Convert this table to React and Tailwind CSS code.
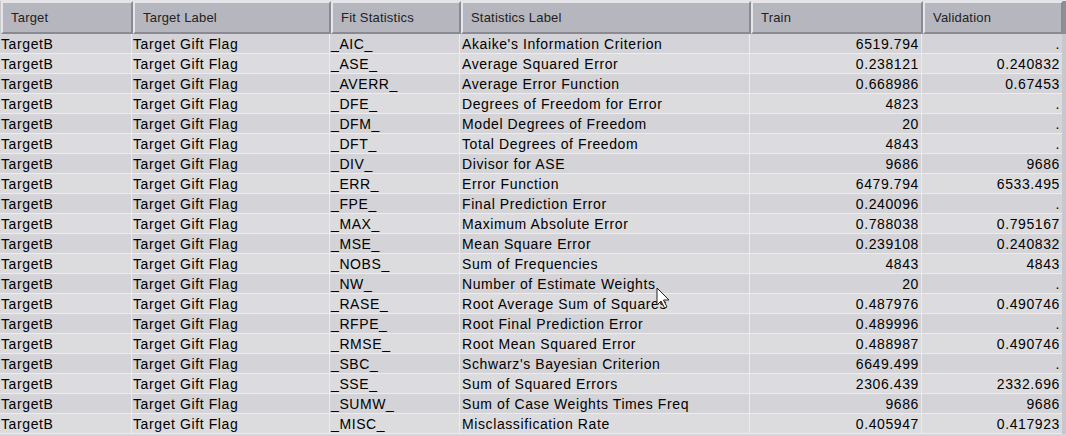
import React from 'react';

const rows = [
  ['_AIC_', "Akaike's Information Criterion", '6519.794', '.'],
  ['_ASE_', 'Average Squared Error', '0.238121', '0.240832'],
  ['_AVERR_', 'Average Error Function', '0.668986', '0.67453'],
  ['_DFE_', 'Degrees of Freedom for Error', '4823', '.'],
  ['_DFM_', 'Model Degrees of Freedom', '20', '.'],
  ['_DFT_', 'Total Degrees of Freedom', '4843', '.'],
  ['_DIV_', 'Divisor for ASE', '9686', '9686'],
  ['_ERR_', 'Error Function', '6479.794', '6533.495'],
  ['_FPE_', 'Final Prediction Error', '0.240096', '.'],
  ['_MAX_', 'Maximum Absolute Error', '0.788038', '0.795167'],
  ['_MSE_', 'Mean Square Error', '0.239108', '0.240832'],
  ['_NOBS_', 'Sum of Frequencies', '4843', '4843'],
  ['_NW_', 'Number of Estimate Weights', '20', '.'],
  ['_RASE_', 'Root Average Sum of Squares', '0.487976', '0.490746'],
  ['_RFPE_', 'Root Final Prediction Error', '0.489996', '.'],
  ['_RMSE_', 'Root Mean Squared Error', '0.488987', '0.490746'],
  ['_SBC_', "Schwarz's Bayesian Criterion", '6649.499', '.'],
  ['_SSE_', 'Sum of Squared Errors', '2306.439', '2332.696'],
  ['_SUMW_', 'Sum of Case Weights Times Freq', '9686', '9686'],
  ['_MISC_', 'Misclassification Rate', '0.405947', '0.417923'],
];

const headers = ['Target', 'Target Label', 'Fit Statistics', 'Statistics Label', 'Train', 'Validation'];
const cols = 'grid grid-cols-[132px_198px_130px_290px_172px_140px]';

export default function App() {
  return (
    <div
      className="relative w-[1066px] h-[436px] bg-[#d6d6da] overflow-hidden text-black"
      style={{ fontFamily: '"Liberation Sans", Arial, sans-serif' }}
    >
      <div className="flex border-t border-[#e4e4e8] bg-[#c8c8cc] pl-[1px]">
        <div className={`${cols} h-[33px]`}>
          {headers.map((h) => (
            <div
              key={h}
              className="flex items-center pl-[8px] pt-[1px] bg-[#b6b6be] border-t-2 border-l-2 border-t-[#e6e6ea] border-l-[#e6e6ea] border-b-2 border-r-2 border-b-[#8a8a92] border-r-[#8a8a92] text-[13px] tracking-[0.2px] text-[#222]"
            >
              {h}
            </div>
          ))}
        </div>
        <div className="flex-1 bg-[#8e8e96]" />
      </div>
      <div className="flex">
        <div className="flex flex-col">
          {rows.map((r, i) => (
            <div
              key={r[0]}
              className={`${cols} h-[20px] border-b border-[#ececef] text-[14px] leading-[20px] tracking-[0.6px] ${
                i % 2 === 0 ? 'bg-[#d4d4d8]' : 'bg-[#dcdcdf]'
              }`}
            >
              <div className="pl-[1px] border-r border-[#ececef] whitespace-nowrap">TargetB</div>
              <div className="pl-[1px] border-r border-[#ececef] whitespace-nowrap">Target Gift Flag</div>
              <div className="pl-[1px] border-r border-[#ececef] whitespace-nowrap">{r[0]}</div>
              <div className="pl-[2px] border-r border-[#ececef] whitespace-nowrap">{r[1]}</div>
              <div className="pr-[2px] border-r border-[#ececef] text-right whitespace-nowrap">{r[2]}</div>
              <div className="pr-[2px] text-right whitespace-nowrap">{r[3]}</div>
            </div>
          ))}
        </div>
        <div className="flex-1 bg-[#c8c8cc]" />
      </div>
      <svg className="absolute left-[656px] top-[287px]" width="22" height="26" viewBox="0 0 22 26">
        <path d="M1 1 L1 18 L5 14 L8.5 21 L11 20 L7.5 13 L13 13 Z" fill="#fff" stroke="#222" strokeWidth="1" strokeLinejoin="round" />
      </svg>
    </div>
  );
}
